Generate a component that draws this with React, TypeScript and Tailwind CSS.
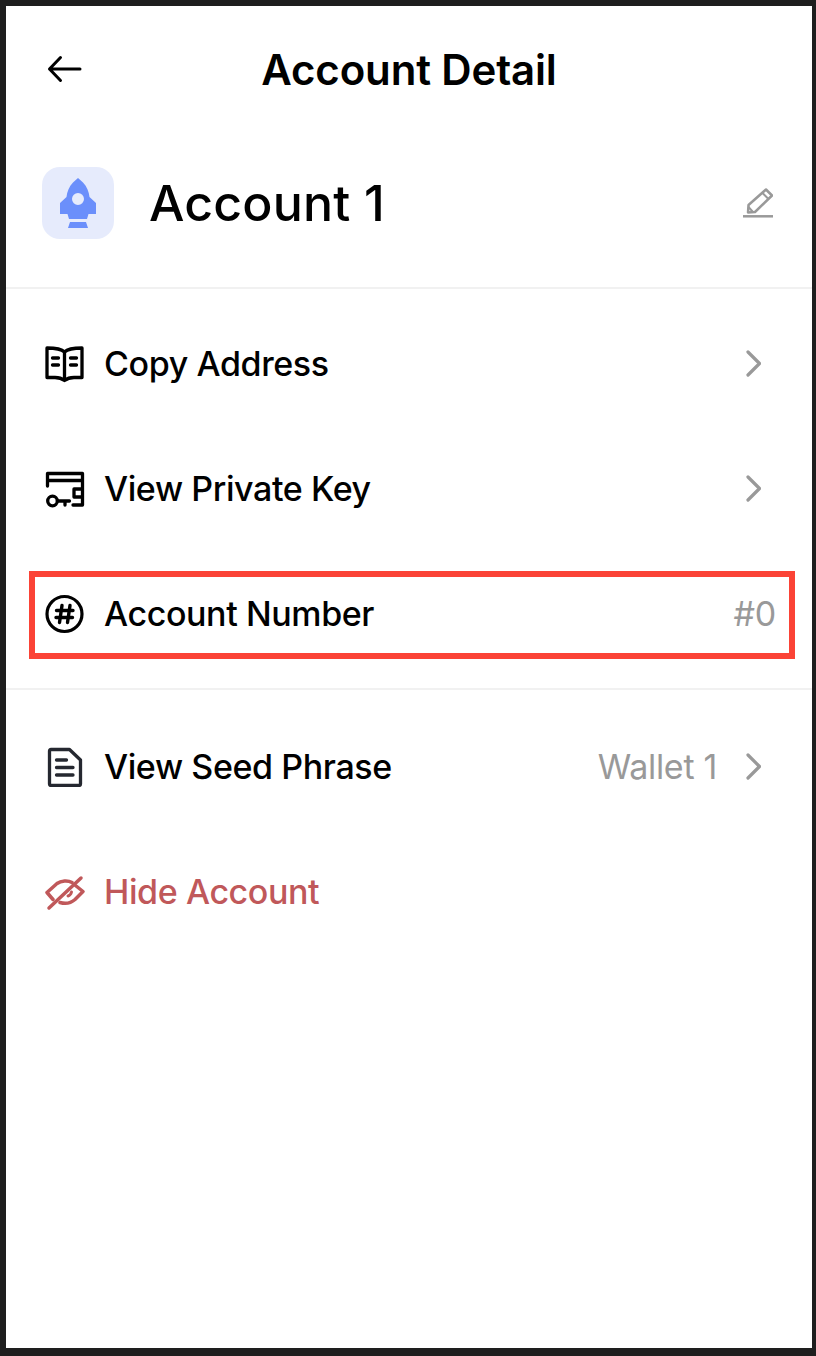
import type { ReactNode } from 'react'

const font = { fontFamily: 'Inter, sans-serif' }

function BackArrow() {
  return (
    <svg width="36" height="28" viewBox="0 0 36 28" fill="none" stroke="#000" strokeWidth="3" strokeLinecap="round" strokeLinejoin="round">
      <path d="M34 14H3.500M14.500 2.500L3.500 14L14.500 25.500" />
    </svg>
  )
}

function Rocket() {
  return (
    <svg width="72" height="72" viewBox="0 0 72 72">
      <path
        fill="#6b8ffb"
        fillRule="evenodd"
        d="M36 11L41 15.500C45 19.500 47 25 47.500 30L54 36V47H46.500L45 52H27L25.500 47H18V36L24.500 30C25 25 27 19.500 31 15.500ZM36 26A6 6 0 1 0 36 38A6 6 0 1 0 36 26Z"
      />
      <path fill="#6b8ffb" d="M28 55H44L46 61H26Z" />
    </svg>
  )
}

function Pencil() {
  return (
    <svg width="30" height="30" viewBox="0 0 30 30" fill="none" stroke="#999" strokeWidth="2.500" strokeLinejoin="round">
      <path d="M23 1.500L29 7.500L12 24L5 24.500L5.500 17Z" />
      <path d="M19.500 5L25.500 11M5.500 19L10 24" strokeWidth="2" />
      <path d="M0 28.300H30" />
    </svg>
  )
}

function Chevron() {
  return (
    <svg width="15" height="27" viewBox="0 0 15 27" fill="none" stroke="#999" strokeWidth="3.200" strokeLinecap="round" strokeLinejoin="round">
      <path d="M2 2L13.500 13.500L2 25" />
    </svg>
  )
}

function BookIcon() {
  return (
    <svg width="40" height="40" viewBox="0 0 40 40" fill="none" stroke="#000" strokeWidth="3.300" strokeLinecap="round" strokeLinejoin="round">
      <path d="M19.500 8C16.500 5 12 4 2 4V33.500H10C14 33.500 17 34.500 19.500 36.500C22 34.500 25 33.500 29 33.500H37V4C27 4 22.500 5 19.500 8ZM19.500 8V36" />
      <path d="M7.500 14H13.500M7.500 21H13.500M25.500 14H31.500M25.500 21H31.500" />
    </svg>
  )
}

function KeyCardIcon() {
  return (
    <svg width="40" height="40" viewBox="0 0 40 40" fill="none" stroke="#000" strokeWidth="3.300" strokeLinecap="round" strokeLinejoin="round">
      <path d="M2.500 17V4.500H37.500V36H28M2.500 11.500H37.500M37.500 20H29V28H37.500" />
      <circle cx="7.500" cy="32" r="4.800" />
      <path d="M12.500 32H24.500M20 32V36" />
    </svg>
  )
}

function HashIcon() {
  return (
    <svg width="40" height="40" viewBox="0 0 40 40" fill="none" stroke="#000" strokeLinecap="round">
      <circle cx="19.500" cy="20" r="17.500" strokeWidth="3.200" />
      <path d="M17 11.500L14.500 28.500M25 11.500L22.500 28.500M11.500 16.500H28M11 23.500H27.500" strokeWidth="3.400" />
    </svg>
  )
}

function DocIcon() {
  return (
    <svg width="40" height="40" viewBox="0 0 40 40" fill="none" stroke="#252830" strokeWidth="3.300" strokeLinecap="round" strokeLinejoin="round">
      <path d="M4.500 4C4.500 3 5 2.500 6 2.500H24.500L35.500 13V37C35.500 38 35 38.500 34 38.500H6C5 38.500 4.500 38 4.500 37Z" />
      <path d="M11.500 13H21.500M11.500 20.500H28M11.500 28H28" />
    </svg>
  )
}

function EyeOffIcon() {
  return (
    <svg width="40" height="40" viewBox="0 0 40 40" fill="none" stroke="#c0585a" strokeWidth="3.500" strokeLinecap="round" strokeLinejoin="round">
      <path d="M4 36L36 6" />
      <path d="M8 27.500L2 20.500L12 11.500C16 8.500 23 8 27 10.500M30.500 13.500L38 19.500L30 27.500C26 31 20 32 15 30.500" />
      <path d="M26.500 20C26 22 25 23.500 23 24" strokeWidth="3" />
    </svg>
  )
}

function Row({ icon, label, right, chevron, danger, highlight }: { icon: ReactNode; label: string; right?: string; chevron?: boolean; danger?: boolean; highlight?: boolean }) {
  return (
    <div className="relative flex h-[125px] items-center pl-[39px] pr-[36px]">
      {highlight && <div className="absolute left-[23px] right-[17px] top-[20px] h-[88px] border-[6px] border-[#fb4336]" />}
      <div className="shrink-0">{icon}</div>
      <span className={`ml-[19px] text-[34px] font-medium tracking-[-0.4px] ${danger ? 'text-[#c0585a]' : 'text-black'}`}>{label}</span>
      <div className="ml-auto flex items-center">
        {right && <span className="text-[34px] tracking-[-0.3px] text-[#999]">{right}</span>}
        {chevron && <div className="ml-[29px] mr-[15px]"><Chevron /></div>}
      </div>
    </div>
  )
}

export default function App() {
  return (
    <div className="h-[1356px] w-[816px] bg-[#1e1e1e] pb-[8px] pl-[6px] pr-[4px] pt-[6px]" style={font}>
      <div className="flex h-full flex-col bg-white">
        <div className="relative flex h-[126px] items-center justify-center">
          <div className="absolute left-[40px] top-[49px]"><BackArrow /></div>
          <h1 className="text-[42px] font-semibold tracking-[-0.15px] text-black">Account Detail</h1>
        </div>

        <div className="flex items-center border-b-2 border-[#f1f1f1] pb-[48px] pl-[36px] pr-[39px] pt-[35px]">
          <div className="h-[72px] w-[72px] rounded-[18px] bg-[#e6ebfc]"><Rocket /></div>
          <span className="ml-[35px] text-[50px] font-medium leading-none tracking-[0.2px] text-black">Account 1</span>
          <div className="ml-auto"><Pencil /></div>
        </div>

        <div className="mt-[12px] border-b-2 border-[#f1f1f1] pb-[12px]">
          <Row icon={<BookIcon />} label="Copy Address" chevron />
          <Row icon={<KeyCardIcon />} label="View Private Key" chevron />
          <Row icon={<HashIcon />} label="Account Number" right="#0" highlight />
        </div>

        <div className="mt-[14px]">
          <Row icon={<DocIcon />} label="View Seed Phrase" right="Wallet 1" chevron />
          <Row icon={<EyeOffIcon />} label="Hide Account" danger />
        </div>
      </div>
    </div>
  )
}
